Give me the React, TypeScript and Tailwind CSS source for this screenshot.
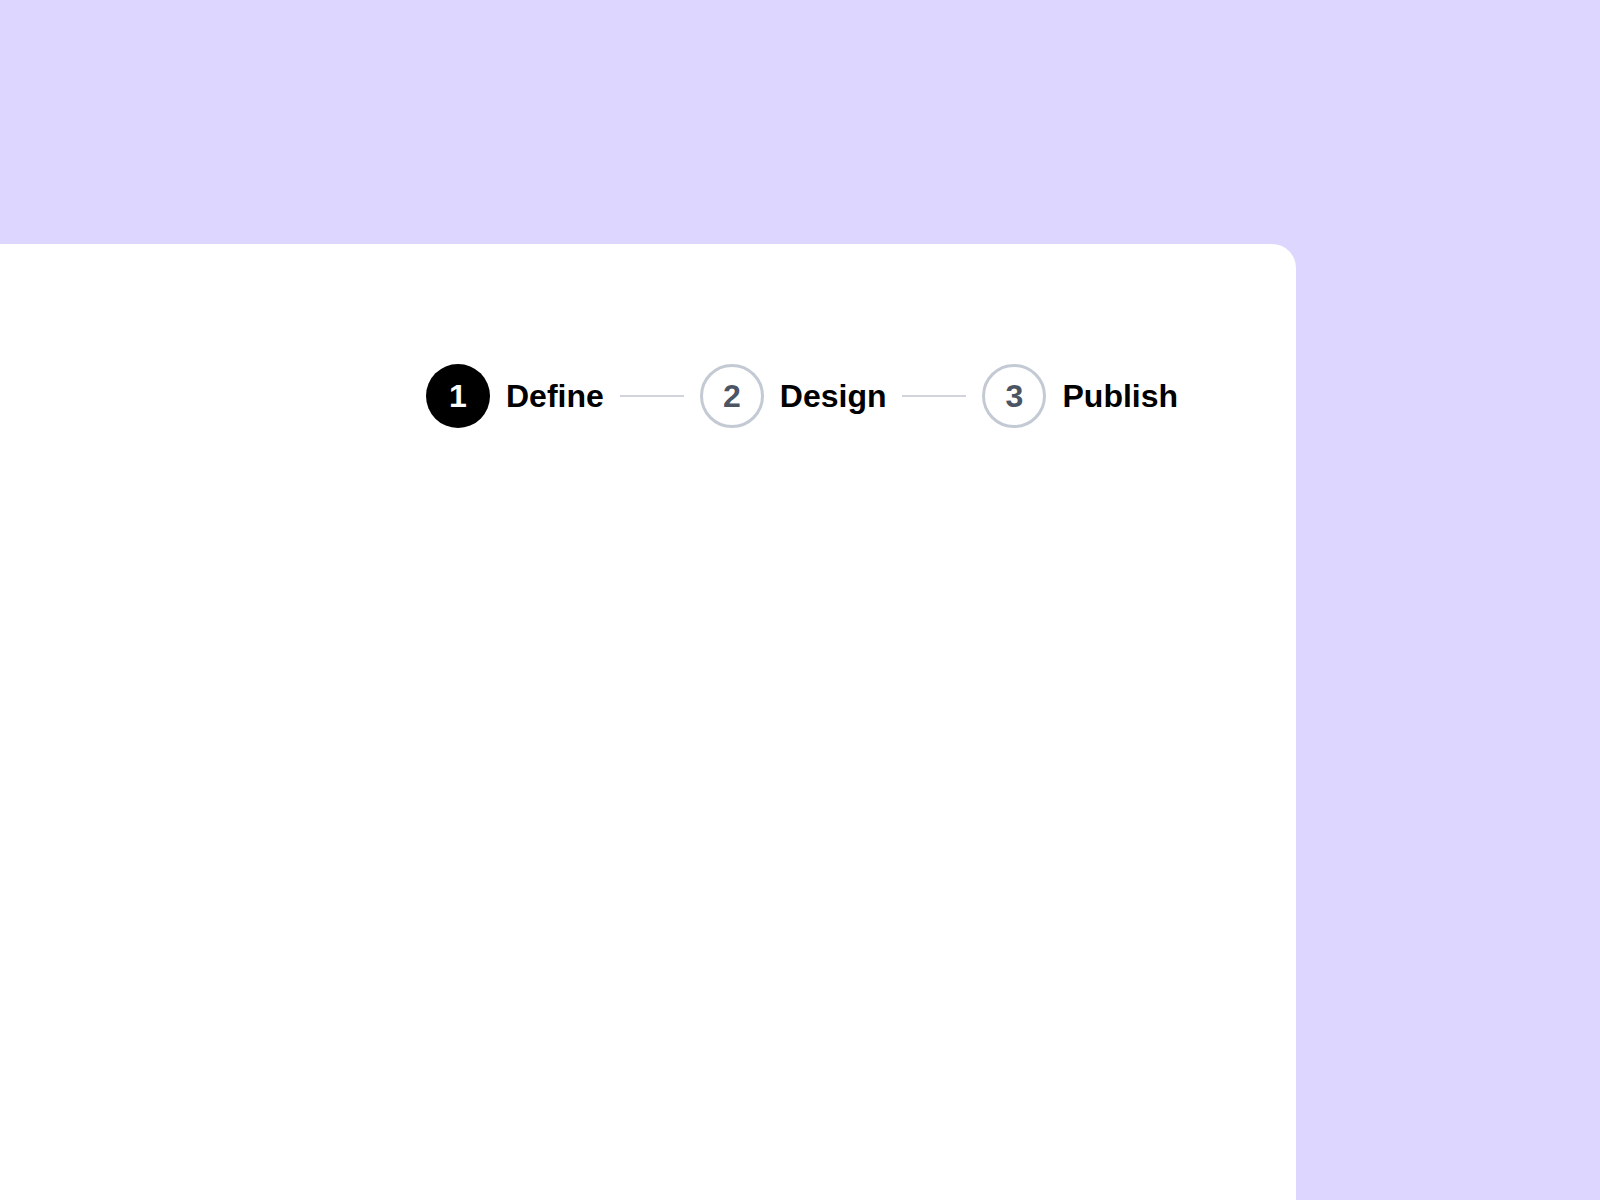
import React from "react";

function Step({ n, label, active }: { n: number; label: string; active?: boolean }) {
  return (
    <div className="flex items-center gap-4">
      {active ? (
        <div className="w-16 h-16 rounded-full bg-black text-white flex items-center justify-center text-[32px] font-bold">
          {n}
        </div>
      ) : (
        <div className="w-16 h-16 rounded-full border-[3px] border-[#c4cad4] text-[#4b5563] flex items-center justify-center text-[32px] font-bold">
          {n}
        </div>
      )}
      <span className="text-[32px] font-bold text-black leading-none">{label}</span>
    </div>
  );
}

function Line() {
  return <div className="w-16 h-[2px] bg-[#d1d5db]" />;
}

export default function App() {
  return (
    <div
      className="w-[1600px] h-[1200px] bg-[#ddd6fe] overflow-hidden pt-[244px]"
      style={{ fontFamily: '"Liberation Sans", Arial, sans-serif' }}
    >
      <div className="w-[1296px] h-full bg-white rounded-tr-3xl pt-[120px] pl-[426px]">
        <div className="flex items-center gap-4">
          <Step n={1} label="Define" active />
          <Line />
          <Step n={2} label="Design" />
          <Line />
          <Step n={3} label="Publish" />
        </div>
      </div>
    </div>
  );
}
